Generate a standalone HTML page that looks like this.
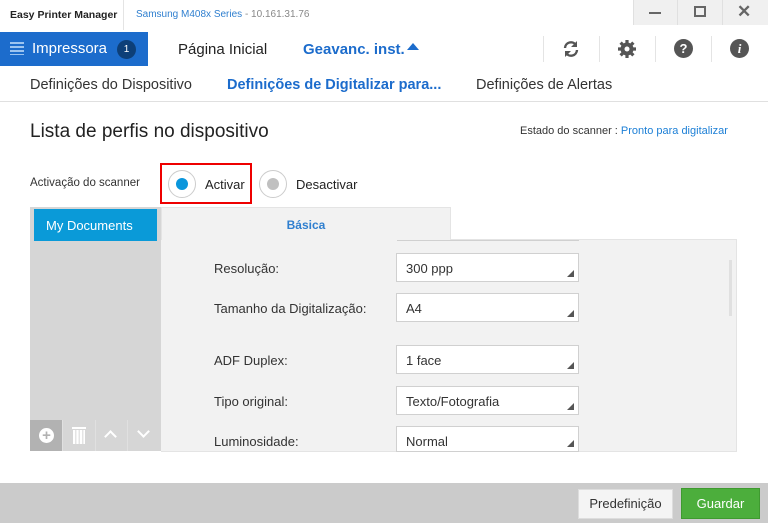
<!DOCTYPE html>
<html><head><meta charset="utf-8"><style>
*{box-sizing:border-box;margin:0;padding:0}
body{width:768px;height:523px;overflow:hidden;background:#fff;font-family:"Liberation Sans",sans-serif;color:#333;position:relative}
.a{position:absolute}
.sel{position:absolute;left:396px;width:183px;height:29px;background:#fff;border:1px solid #d0d0d0;font-size:13px;padding:7px 9px;color:#333}
.sel:after{content:"";position:absolute;right:4px;bottom:4px;border-left:7px solid transparent;border-bottom:7px solid #555}
.lbl{position:absolute;left:214px;font-size:13px;color:#333}
.sep{position:absolute;top:36px;width:1px;height:26px;background:#e4e4e4}
</style></head><body>
<div class="a" style="left:10px;top:9px;font-size:10.5px;font-weight:bold;color:#222">Easy Printer Manager</div>
<div class="a" style="left:123px;top:0;width:1px;height:30px;background:#e4e4e4"></div>
<div class="a" style="left:136px;top:9px;font-size:10px;color:#2f7fcf">Samsung M408x Series <span style="color:#888">- 10.161.31.76</span></div>
<div class="a" style="left:633px;top:0;width:135px;height:25px;background:#f0f0f0;border-left:1px solid #e0e0e0"></div>
<div class="a" style="left:677px;top:0;width:1px;height:25px;background:#e0e0e0"></div>
<div class="a" style="left:722px;top:0;width:1px;height:25px;background:#e0e0e0"></div>
<div class="a" style="left:649px;top:12px;width:12px;height:2px;background:#666"></div>
<div class="a" style="left:694px;top:6px;width:12px;height:11px;border:2px solid #666"></div>
<div class="a" style="left:737px;top:2px;font-size:17px;color:#666;font-weight:bold">✕</div>

<div class="a" style="left:0;top:32px;width:148px;height:34px;background:#1c6ccc"></div>
<div class="a" style="left:10px;top:42px;width:14px;height:13px;background:repeating-linear-gradient(#9cc4f0 0 2px,transparent 2px 4px)"></div>
<div class="a" style="left:32px;top:40px;font-size:15px;color:#fff">Impressora</div>
<div class="a" style="left:117px;top:40px;width:19px;height:19px;border-radius:50%;background:#0d3f78;color:#fff;font-size:10px;text-align:center;line-height:19px">1</div>
<div class="a" style="left:178px;top:41px;font-size:15px;color:#222">Página Inicial</div>
<div class="a" style="left:303px;top:41px;font-size:15px;color:#1c6ccc;font-weight:bold">Geavanc. inst.</div>
<div class="a" style="left:407px;top:43px;border-left:6px solid transparent;border-right:6px solid transparent;border-bottom:7px solid #1c6ccc"></div>
<div class="sep" style="left:543px"></div><div class="sep" style="left:599px"></div><div class="sep" style="left:655px"></div><div class="sep" style="left:711px"></div>
<svg class="a" style="left:561px;top:39px" width="20" height="20" viewBox="0 0 20 20"><path d="M4 9a6 6 0 0 1 11-3M16 11a6 6 0 0 1-11 3" fill="none" stroke="#555" stroke-width="2.4"/><path d="M16 2v6h-6z M4 18v-6h6z" fill="#555"/></svg>
<svg class="a" style="left:617px;top:39px" width="20" height="20" viewBox="0 0 20 20"><g fill="#555"><circle cx="10" cy="10" r="6.5"/><g stroke="#555" stroke-width="3.2"><path d="M10 1v18M1 10h18M3.6 3.6l12.8 12.8M16.4 3.6L3.6 16.4"/></g></g><circle cx="10" cy="10" r="2.5" fill="#fff"/></svg>
<div class="a" style="left:674px;top:39px;width:19px;height:19px;border-radius:50%;background:#555;color:#fff;font-size:13px;font-weight:bold;text-align:center;line-height:19px">?</div>
<div class="a" style="left:730px;top:39px;width:19px;height:19px;border-radius:50%;background:#555;color:#fff;font-size:13px;font-weight:bold;font-style:italic;font-family:'Liberation Serif',serif;text-align:center;line-height:19px">i</div>

<div class="a" style="left:30px;top:77px;font-size:14.5px;color:#333">Definições do Dispositivo</div>
<div class="a" style="left:227px;top:77px;font-size:14.5px;color:#1c6ccc;font-weight:bold">Definições de Digitalizar para...</div>
<div class="a" style="left:476px;top:77px;font-size:14.5px;color:#333">Definições de Alertas</div>
<div class="a" style="left:0;top:101px;width:768px;height:1px;background:#e0e0e0"></div>

<div class="a" style="left:30px;top:121px;font-size:19px;color:#222">Lista de perfis no dispositivo</div>
<div class="a" style="left:520px;top:125px;font-size:11px;color:#333">Estado do scanner : <span style="color:#1c7fd6">Pronto para digitalizar</span></div>

<div class="a" style="left:30px;top:177px;font-size:11.5px;color:#333">Activação do scanner</div>
<div class="a" style="left:160px;top:163px;width:92px;height:41px;border:2px solid #e00"></div>
<div class="a" style="left:168px;top:170px;width:28px;height:28px;border-radius:50%;border:1px solid #ccc;background:#fff"></div>
<div class="a" style="left:176px;top:178px;width:12px;height:12px;border-radius:50%;background:#0a96dc"></div>
<div class="a" style="left:205px;top:177px;font-size:13px;color:#222">Activar</div>
<div class="a" style="left:259px;top:170px;width:28px;height:28px;border-radius:50%;border:1px solid #ccc;background:#fff"></div>
<div class="a" style="left:267px;top:178px;width:12px;height:12px;border-radius:50%;background:#c0c0c0"></div>
<div class="a" style="left:296px;top:177px;font-size:13px;color:#222">Desactivar</div>

<div class="a" style="left:30px;top:207px;width:131px;height:244px;background:#d6d6d6"></div>
<div class="a" style="left:34px;top:209px;width:123px;height:32px;background:#0a9ad8;color:#fff;font-size:13px;padding:9px 12px">My Documents</div>
<div class="a" style="left:30px;top:420px;width:32px;height:31px;background:#b2b2b2"></div>
<div class="a" style="left:62px;top:420px;width:1px;height:31px;background:#e0e0e0"></div>
<div class="a" style="left:95px;top:420px;width:1px;height:31px;background:#e0e0e0"></div>
<div class="a" style="left:127px;top:420px;width:1px;height:31px;background:#e0e0e0"></div>
<div class="a" style="left:39px;top:428px;width:15px;height:15px;border-radius:50%;background:#fff;color:#b2b2b2;font-size:15px;font-weight:bold;text-align:center;line-height:15px">+</div>
<div class="a" style="left:72px;top:427px;width:14px;height:2px;background:#fff"></div>
<div class="a" style="left:73px;top:430px;width:12px;height:14px;background:repeating-linear-gradient(90deg,#fff 0 2px,#e4e4e4 2px 3.5px)"></div>
<div class="a" style="left:106px;top:432px;width:9px;height:9px;border-left:2.5px solid #fff;border-top:2.5px solid #fff;transform:rotate(45deg)"></div>
<div class="a" style="left:139px;top:427px;width:9px;height:9px;border-right:2.5px solid #fff;border-bottom:2.5px solid #fff;transform:rotate(45deg)"></div>

<div class="a" style="left:161px;top:207px;width:290px;height:34px;background:#f2f2f2;border:1px solid #e4e4e4;border-bottom:none;text-align:center;font-size:12px;font-weight:bold;color:#2f7fcf;padding-top:10px">Básica</div>
<div class="a" style="left:161px;top:240px;width:576px;height:212px;background:#f2f2f2;border:1px solid #e4e4e4;border-top:none;border-left:none"></div>
<div class="a" style="left:451px;top:239px;width:286px;height:1px;background:#e4e4e4"></div>
<div class="a" style="left:397px;top:240px;width:182px;height:1px;background:#d0d0d0"></div>
<div class="a" style="left:729px;top:260px;width:3px;height:56px;background:#e0e0e0"></div>

<div class="lbl" style="top:261px">Resolução:</div><div class="sel" style="top:253px">300 ppp</div>
<div class="lbl" style="top:301px">Tamanho da Digitalização:</div><div class="sel" style="top:293px">A4</div>
<div class="lbl" style="top:353px">ADF Duplex:</div><div class="sel" style="top:345px">1 face</div>
<div class="lbl" style="top:394px">Tipo original:</div><div class="sel" style="top:386px">Texto/Fotografia</div>
<div class="lbl" style="top:434px">Luminosidade:</div><div class="sel" style="top:426px;height:26px">Normal</div>

<div class="a" style="left:0;top:483px;width:768px;height:40px;background:#cbcbcb"></div>
<div class="a" style="left:578px;top:489px;width:95px;height:30px;background:#f4f4f4;border:1px solid #ddd;font-size:13px;color:#333;text-align:center;line-height:28px">Predefinição</div>
<div class="a" style="left:681px;top:488px;width:79px;height:31px;background:#4cae3c;border:1px solid #3f9a30;font-size:13px;color:#fff;text-align:center;line-height:29px">Guardar</div>
</body></html>
